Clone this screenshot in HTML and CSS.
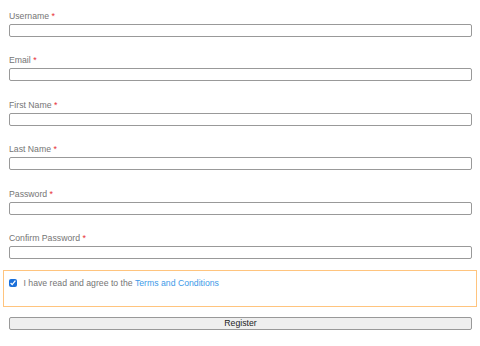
FILE: index.html
```html
<!DOCTYPE html>
<html>
<head>
<meta charset="utf-8">
<link rel="stylesheet" href="styles.css">
</head>
<body>
<form class="form">
  <div class="field"><label class="label">Username <span class="req">*</span></label><input class="input" type="text"></div>
  <div class="field"><label class="label">Email <span class="req">*</span></label><input class="input" type="text"></div>
  <div class="field"><label class="label">First Name <span class="req">*</span></label><input class="input" type="text"></div>
  <div class="field"><label class="label">Last Name <span class="req">*</span></label><input class="input" type="text"></div>
  <div class="field"><label class="label">Password <span class="req">*</span></label><input class="input" type="password"></div>
  <div class="field"><label class="label">Confirm Password <span class="req">*</span></label><input class="input" type="password"></div>
  <div class="terms">
    <label class="terms-label"><input class="check" type="checkbox" checked><span>I have read and agree to the <a class="link" href="#">Terms and Conditions</a></span></label>
  </div>
  <button class="btn" type="button">Register</button>
</form>
</body>
</html>
```
FILE: styles.css
```css
html, body { margin: 0; padding: 0; background: #fff; }
body { font-family: "Liberation Sans", Arial, sans-serif; width: 480px; }
.form { display: flex; flex-direction: column; padding-top: 10px; }
.field { display: flex; flex-direction: column; margin: 0 8px 17.4px 9px; }
.label { font-size: 8.7px; line-height: 12px; color: #757575; margin-bottom: 2px; }
.req { color: #e8303a; }
.input { box-sizing: border-box; height: 13px; width: 463px; margin: 0; padding: 0; border: 1px solid #999; border-radius: 2px; background: #fff; }
.terms { box-sizing: border-box; margin: -6.4px 3px 0 3px; height: 37px; border: 1.5px solid #ffc47e; padding: 6px 4.5px 0 4.5px; }
.terms-label { display: flex; align-items: center; gap: 7px; font-size: 8.7px; line-height: 12px; color: #757575; }
.check { width: 8px; height: 8px; margin: 0; accent-color: #1a6fd9; }
.link { color: #3d9ae8; text-decoration: none; }
.btn { box-sizing: border-box; margin: 10.5px 8px 0 9px; width: 463px; height: 13px; padding: 0; border: 1px solid #999; border-radius: 2px; background: #efefef; font-family: "Liberation Sans", Arial, sans-serif; font-size: 8.7px; line-height: 11px; color: #222; }
```
